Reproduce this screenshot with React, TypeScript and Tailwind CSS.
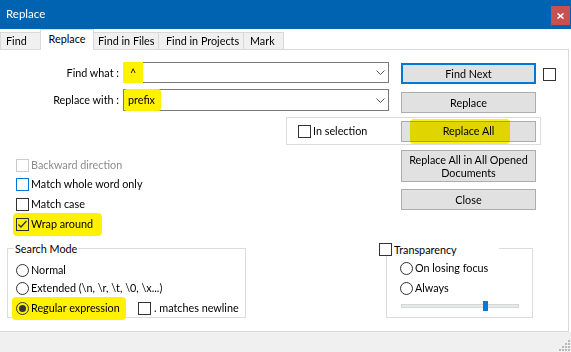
import React from "react";

// Notepad++ style Replace dialog

const marker = "bg-[#fff200]";

function CheckBox({
  checked,
  tone = "normal",
}: {
  checked?: boolean;
  tone?: "normal" | "focus" | "disabled";
}) {
  const border =
    tone === "focus"
      ? "border-[#0078d7]"
      : tone === "disabled"
        ? "border-[#cccccc]"
        : "border-[#333333]";
  return (
    <span
      className={`flex h-[13px] w-[13px] shrink-0 items-center justify-center border ${border}`}
    >
      {checked && (
        <svg width="11" height="11" viewBox="0 0 11 11">
          <polyline
            points="1.5,5.5 4,8 9.5,2"
            fill="none"
            stroke="#333333"
            strokeWidth="1.3"
          />
        </svg>
      )}
    </span>
  );
}

function Radio({ selected }: { selected?: boolean }) {
  return (
    <span className="flex h-[13px] w-[13px] shrink-0 items-center justify-center rounded-full border border-[#333333]">
      {selected && <span className="h-[7px] w-[7px] rounded-full bg-[#333333]" />}
    </span>
  );
}

function Chevron() {
  return (
    <svg width="9" height="5" viewBox="0 0 9 5" className="mr-[3px] self-center">
      <polyline
        points="0.5,0.5 4.5,4.5 8.5,0.5"
        fill="none"
        stroke="#555555"
        strokeWidth="1"
      />
    </svg>
  );
}

function Button({
  children,
  className = "",
}: {
  children: React.ReactNode;
  className?: string;
}) {
  return (
    <div
      className={`relative flex w-[135px] shrink-0 items-center justify-center bg-[#e1e1e1] text-center ${className}`}
    >
      {children}
    </div>
  );
}

export default function App() {
  return (
    <div className="flex h-[352px] w-[571px] flex-col overflow-hidden whitespace-nowrap bg-white font-['Lato','Segoe_UI',sans-serif] text-[10.8px] leading-[16px] text-black">
      {/* Title bar */}
      <div className="flex h-[29px] shrink-0 items-start justify-between bg-[#0063b1] pl-[6px] pr-[1px]">
        <span className="mt-[6px] text-[11.5px] text-white">Replace</span>
        <span className="mt-[6px] flex h-[19px] w-[19px] items-center justify-center bg-[#c75050]">
          <svg width="7" height="6" viewBox="0 0 7 6">
            <path d="M0.5 0.5 L6.5 5.5 M6.5 0.5 L0.5 5.5" stroke="white" strokeWidth="1.6" />
          </svg>
        </span>
      </div>

      {/* Tabs */}
      <div className="flex h-[21px] w-[569px] shrink-0 items-end border-b border-[#d9d9d9]">
        <div className="flex h-[17px] w-[41px] items-center border border-b-0 border-[#d9d9d9] bg-[#f0f0f0] pl-[5px]">
          Find
        </div>
        <div className="relative z-10 -mb-px -ml-px flex h-[21px] w-[54px] justify-center border border-b-0 border-[#d9d9d9] bg-white pt-[1px]">
          Replace
        </div>
        <div className="-ml-px flex h-[17px] w-[66px] items-center border border-b-0 border-[#d9d9d9] bg-[#f0f0f0] pl-[4px]">
          Find in Files
        </div>
        <div className="-ml-px flex h-[17px] w-[86px] items-center border border-b-0 border-[#d9d9d9] bg-[#f0f0f0] pl-[7px]">
          Find in Projects
        </div>
        <div className="-ml-px flex h-[17px] w-[41px] items-center border border-b-0 border-[#d9d9d9] bg-[#f0f0f0] pl-[6px]">
          Mark
        </div>
      </div>

      {/* Tab panel */}
      <div className="flex h-[282px] w-[569px] shrink-0 flex-col border-b border-r border-[#d9d9d9]">
        {/* Find / replace fields */}
        <div className="flex h-[63px] shrink-0 pt-[12px]">
          <div className="flex flex-col">
            <div className="flex h-[21px] items-center">
              <span className="w-[119px] text-right">Find what :</span>
              <div className="ml-[4px] flex h-[21px] w-[266px] items-stretch border border-[#7a7a7a]">
                <span className={`-my-px -ml-px flex w-[20px] items-center pl-[7px] ${marker}`}>
                  ^
                </span>
                <span className="flex-1" />
                <Chevron />
              </div>
            </div>
            <div className="mt-[6px] flex h-[22px] items-center">
              <span className="w-[119px] text-right">Replace with :</span>
              <div className="ml-[4px] flex h-[22px] w-[266px] items-stretch border border-[#7a7a7a]">
                <span className={`-my-px flex w-[37px] items-center rounded-[3px] pl-[4px] ${marker}`}>
                  prefix
                </span>
                <span className="flex-1" />
                <Chevron />
              </div>
            </div>
          </div>
          <div className="ml-[12px] flex flex-col pt-[1px]">
            <Button className="h-[21px] border-2 border-[#0078d7]">Find Next</Button>
            <Button className="mt-[8px] h-[21px] border border-[#adadad]">Replace</Button>
          </div>
          <div className="ml-[7px] mt-[6px]">
            <CheckBox />
          </div>
        </div>

        {/* In selection */}
        <div className="ml-[286px] mt-[4px] flex h-[28px] w-[255px] shrink-0 items-center border border-[#dcdcdc] pl-[11px] pr-[4px]">
          <CheckBox />
          <span className="ml-[2px]">In selection</span>
          <Button className="ml-auto h-[21px] border border-[#adadad]">
            <span className="absolute -bottom-[3px] -top-[3px] left-[8px] right-[25px] rounded-[4px] bg-[#fff200] mix-blend-multiply" />
            <span className="relative">Replace All</span>
          </Button>
        </div>

        {/* Options + more buttons */}
        <div className="mt-[5px] flex h-[93px] shrink-0">
          <div className="flex w-[401px] flex-col pl-[16px] pt-[6px]">
            <div className="flex h-[18px] items-center gap-[2px]">
              <CheckBox tone="disabled" />
              <span className="text-[#8c8c8c]">Backward direction</span>
            </div>
            <div className="flex h-[20px] items-center gap-[2px]">
              <CheckBox tone="focus" />
              <span>Match whole word only</span>
            </div>
            <div className="flex h-[20px] items-center gap-[2px]">
              <CheckBox />
              <span>Match case</span>
            </div>
            <div className="flex h-[20px] items-center">
              <div className={`-ml-[3px] flex h-[23px] w-[89px] items-center gap-[2px] rounded-[4px] pl-[3px] ${marker}`}>
                <CheckBox checked />
                <span>Wrap around</span>
              </div>
            </div>
          </div>
          <div className="flex flex-col">
            <Button className="h-[32px] border border-[#adadad] leading-[13px]">
              Replace All in All Opened
              <br />
              Documents
            </Button>
            <Button className="mt-[7px] h-[21px] border border-[#adadad]">Close</Button>
          </div>
        </div>

        {/* Group boxes */}
        <div className="flex flex-1">
          <div className="relative ml-[7px] mt-[5px] flex h-[70px] w-[239px] flex-col border border-[#dcdcdc] pl-[8px] pt-[12px]">
            <span className="absolute -top-[8px] left-[6px] bg-white px-[1px]">Search Mode</span>
            <div className="flex h-[18px] items-center gap-[2px]">
              <Radio />
              <span>Normal</span>
            </div>
            <div className="flex h-[18px] items-center gap-[2px]">
              <Radio />
              <span>Extended (\n, \r, \t, \0, \x...)</span>
            </div>
            <div className="mt-[2px] flex h-[18px] items-center">
              <div className={`-ml-[4px] flex h-[23px] w-[114px] shrink-0 items-center gap-[2px] rounded-[4px] pl-[4px] ${marker}`}>
                <Radio selected />
                <span>Regular expression</span>
              </div>
              <div className="ml-[12px] flex items-center gap-[3px]">
                <CheckBox />
                <span>. matches newline</span>
              </div>
            </div>
          </div>

          <div className="relative ml-[140px] mt-[5px] flex h-[70px] w-[147px] flex-col border border-[#dcdcdc] pl-[13px] pt-[9px]">
            <div className="absolute -left-[8px] -top-[6px] flex h-[13px] w-[120px] items-center gap-[2px] bg-white">
              <CheckBox />
              <span>Transparency</span>
            </div>
            <div className="flex h-[20px] items-center gap-[2px]">
              <Radio />
              <span>On losing focus</span>
            </div>
            <div className="flex h-[20px] items-center gap-[2px]">
              <Radio />
              <span>Always</span>
            </div>
            <div className="relative ml-[1px] mt-[6px] h-[4px] w-[118px] border border-[#d6d6d6] bg-[#e7eaea]">
              <span className="absolute -top-[4px] left-[81px] h-[10px] w-[5px] bg-[#007ad9]" />
            </div>
          </div>
        </div>
      </div>

      {/* Status strip with size grip */}
      <div className="flex flex-1 items-end justify-end bg-[#f0f0f0] pb-[1px] pr-[1px]">
        <svg width="12" height="12" viewBox="0 0 12 12">
          {[
            [9, 0],
            [6, 3],
            [9, 3],
            [3, 6],
            [6, 6],
            [9, 6],
            [0, 9],
            [3, 9],
            [6, 9],
            [9, 9],
          ].map(([x, y], i) => (
            <rect key={i} x={x + 1} y={y + 1} width="2" height="2" fill="#b8b8b8" />
          ))}
        </svg>
      </div>
    </div>
  );
}
